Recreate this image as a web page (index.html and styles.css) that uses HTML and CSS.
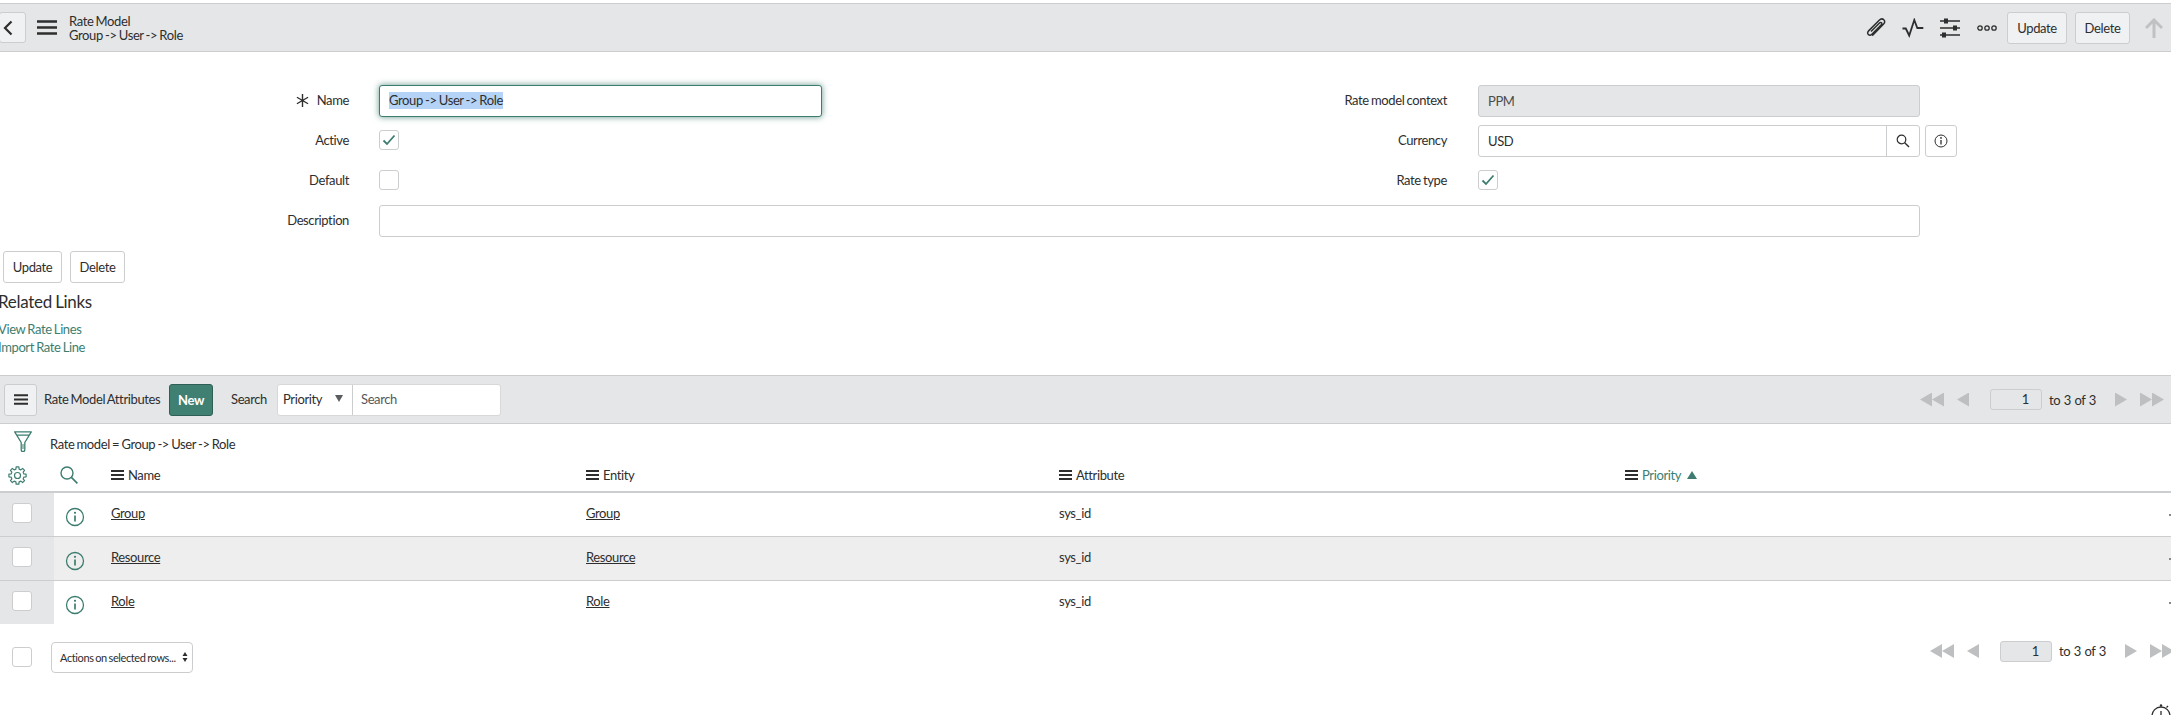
FILE: index.html
```html
<!DOCTYPE html>
<html lang="en">
<head>
<meta charset="utf-8">
<title>Rate Model</title>
<link rel="stylesheet" href="styles.css">
</head>
<body>
<header class="topbar">
  <button class="back" type="button" aria-label="Back"><svg width="10" height="16" viewBox="0 0 10 16"><path d="M8.500 1.500 2 8l6.500 6.500" fill="none" stroke="#2e2e2e" stroke-width="2.200"/></svg></button>
  <svg class="menu" width="20" height="15" viewBox="0 0 20 15"><path d="M0 1.500h20M0 7.500h20M0 13.500h20" stroke="#2e2e2e" stroke-width="2.600"/></svg>
  <div class="title"><div>Rate Model</div><div>Group -&gt; User -&gt; Role</div></div>
  <div class="top-actions">
    <svg class="ic-clip" width="22" height="22" viewBox="0 0 22 22"><path d="M7.200 18.600 18.400 7.300c1.600-1.700 1.500-3.400.4-4.500s-3-1.200-4.600.4L3.600 13.900c-1.200 1.200-1.200 2.700-.3 3.600s2.400.9 3.600-.3L16.300 7.800c.7-.7.700-1.500.2-2s-1.300-.5-2 .2L6 14.500" fill="none" stroke="#2e2e2e" stroke-width="1.500"/></svg>
    <svg class="ic-pulse" width="22" height="20" viewBox="0 0 22 20"><path d="M.5 10.500h3.300l3.400 7L12.300 2l3 8h6" fill="none" stroke="#2e2e2e" stroke-width="1.800"/></svg>
    <svg class="ic-sliders" width="20" height="20" viewBox="0 0 20 20"><path d="M0 3h20M0 10h20M0 17h20" stroke="#2e2e2e" stroke-width="1.500"/><rect x="4" y="0.500" width="4" height="5" fill="#2e2e2e"/><rect x="13" y="7.500" width="4" height="5" fill="#2e2e2e"/><rect x="2" y="14.500" width="4" height="5" fill="#2e2e2e"/></svg>
    <svg class="ic-dots" width="20" height="6" viewBox="0 0 20 6"><circle cx="3" cy="3" r="2.200" fill="none" stroke="#2e2e2e" stroke-width="1.300"/><circle cx="10" cy="3" r="2.200" fill="none" stroke="#2e2e2e" stroke-width="1.300"/><circle cx="17" cy="3" r="2.200" fill="none" stroke="#2e2e2e" stroke-width="1.300"/></svg>
    <button class="btn btn-head btn-update" type="button">Update</button>
    <button class="btn btn-head btn-delete" type="button">Delete</button>
    <svg class="ic-up" width="18" height="20" viewBox="0 0 18 20"><path d="M9 20V3M1 10l8-8 8 8" fill="none" stroke="#bfc1c3" stroke-width="3"/></svg>
  </div>
</header>

<main class="form">
  <label class="lbl lbl-req"><svg width="13" height="13" viewBox="0 0 14 14"><path d="M7 0v14M1 3.500l12 7M13 3.500l-12 7" stroke="#2e2e2e" stroke-width="1.500"/></svg><span>Name</span></label>
  <div class="f-input name-field"><span class="sel">Group -&gt; User -&gt; Role</span></div>
  <div class="lbl col-r">Rate model context</div>
  <div class="f-input readonly wide">PPM</div>

  <div class="lbl">Active</div>
  <div class="chk-cell"><span class="chk"><svg width="14" height="12" viewBox="0 0 14 12"><path d="M1.500 6.500 5 10l7.500-8.500" fill="none" stroke="#3d7d6f" stroke-width="1.800"/></svg></span></div>
  <div class="lbl col-r">Currency</div>
  <div class="lookup"><div class="lookup-text">USD</div><div class="lookup-btn"><svg width="14" height="14" viewBox="0 0 14 14"><circle cx="5.500" cy="5.500" r="4.300" fill="none" stroke="#2e2e2e" stroke-width="1.200"/><path d="m8.700 8.700 4.300 4.300" stroke="#2e2e2e" stroke-width="1.400"/></svg></div></div>
  <div class="info-btn"><svg width="14" height="14" viewBox="0 0 14 14"><circle cx="7" cy="7" r="6" fill="none" stroke="#2e2e2e" stroke-width="1"/><path d="M7 6v4.500" stroke="#2e2e2e" stroke-width="1.300"/><circle cx="7" cy="3.900" r=".9" fill="#2e2e2e"/></svg></div>

  <div class="lbl">Default</div>
  <div class="chk-cell"><span class="chk"></span></div>
  <div class="lbl col-r">Rate type</div>
  <div class="chk-cell col-f"><span class="chk"><svg width="14" height="12" viewBox="0 0 14 12"><path d="M1.500 6.500 5 10l7.500-8.500" fill="none" stroke="#3d7d6f" stroke-width="1.800"/></svg></span></div>

  <div class="lbl">Description</div>
  <div class="f-input desc"></div>
</main>

<div class="form-btns">
  <button class="btn btn-form btn-update2" type="button">Update</button>
  <button class="btn btn-form btn-delete2" type="button">Delete</button>
</div>

<section class="links">
  <h2>Related Links</h2>
  <a href="#">View Rate Lines</a>
  <a href="#">Import Rate Line</a>
</section>

<section class="list-bar">
  <button class="list-menu" type="button" aria-label="Menu"><svg width="14" height="11" viewBox="0 0 14 11"><path d="M0 1.200h14M0 5.500h14M0 9.800h14" stroke="#2e2e2e" stroke-width="2"/></svg></button>
  <span class="list-title">Rate Model Attributes</span>
  <button class="btn-new" type="button">New</button>
  <span class="search-lbl">Search</span>
  <div class="search-box">
    <div class="search-sel"><span>Priority</span><i class="tri-down"></i></div>
    <div class="search-ph">Search</div>
  </div>
  <nav class="pager pager-top">
    <i class="pg l"></i><i class="pg l g1"></i><i class="pg l g2"></i>
    <span class="pg-num">1</span><span class="pg-txt">to 3 of 3</span>
    <i class="pg r g3"></i><i class="pg r g4"></i><i class="pg r"></i>
  </nav>
</section>

<div class="crumb">
  <svg width="18" height="21" viewBox="0 0 18 21"><path d="M.7.900h16.600L10.800 11.500v7.300a1.800 1.800 0 0 1-3.600 0v-7.300zM2.700 4.200h12.600" fill="none" stroke="#3d7d6f" stroke-width="1.300" stroke-linejoin="round"/><path d="M9 13v5" stroke="#3d7d6f" stroke-width="1"/></svg>
  <span>Rate model = Group -&gt; User -&gt; Role</span>
</div>

<table class="grid">
  <colgroup><col class="c-chk"><col class="c-info"><col class="c-name"><col class="c-entity"><col class="c-attr"><col class="c-pri"></colgroup>
  <thead>
    <tr>
      <th><svg class="gear" width="19" height="19" viewBox="0 0 24 24"><path d="M9.990 3.950 10.280 1.140H13.720L14.010 3.950 16.270 4.890 18.470 3.100 20.900 5.530 19.110 7.730 20.050 9.990 22.860 10.280V13.720L20.050 14.010 19.110 16.270 20.900 18.470 18.470 20.900 16.270 19.110 14.010 20.050 13.720 22.860H10.280L9.990 20.050 7.730 19.110 5.530 20.900 3.100 18.470 4.890 16.270 3.950 14.010 1.140 13.720V10.280L3.950 9.990 4.890 7.730 3.100 5.530 5.530 3.100 7.730 4.890Z" fill="none" stroke="#3d7d6f" stroke-width="1.500" stroke-linejoin="round"/><circle cx="12" cy="12" r="3.800" fill="none" stroke="#3d7d6f" stroke-width="1.500"/></svg></th>
      <th><svg class="hsearch" width="18" height="18" viewBox="0 0 18 18"><circle cx="7" cy="7" r="6" fill="none" stroke="#3d7d6f" stroke-width="1.400"/><path d="m11.400 11.400 6 6" stroke="#3d7d6f" stroke-width="1.600"/></svg></th>
      <th><span class="hd"><svg width="13" height="10" viewBox="0 0 13 10"><path d="M0 1h13M0 5h13M0 9h13" stroke="#2e2e2e" stroke-width="1.800"/></svg>Name</span></th>
      <th><span class="hd"><svg width="13" height="10" viewBox="0 0 13 10"><path d="M0 1h13M0 5h13M0 9h13" stroke="#2e2e2e" stroke-width="1.800"/></svg>Entity</span></th>
      <th><span class="hd"><svg width="13" height="10" viewBox="0 0 13 10"><path d="M0 1h13M0 5h13M0 9h13" stroke="#2e2e2e" stroke-width="1.800"/></svg>Attribute</span></th>
      <th><span class="hd sorted"><svg width="13" height="10" viewBox="0 0 13 10"><path d="M0 1h13M0 5h13M0 9h13" stroke="#2e2e2e" stroke-width="1.800"/></svg>Priority<i class="tri-up"></i></span></th>
    </tr>
  </thead>
  <tbody>
    <tr>
      <td class="td-chk"><span class="chk"></span></td>
      <td class="td-info"><svg width="20" height="20" viewBox="0 0 20 20"><circle cx="10" cy="10" r="8.500" fill="none" stroke="#3d7d6f" stroke-width="1.300"/><path d="M10 8.500v6" stroke="#3d7d6f" stroke-width="1.700"/><circle cx="10" cy="5.800" r="1.100" fill="#3d7d6f"/></svg></td>
      <td><a href="#">Group</a></td><td><a href="#">Group</a></td><td>sys_id</td><td class="num"><i class="mark"></i></td>
    </tr>
    <tr class="alt">
      <td class="td-chk"><span class="chk"></span></td>
      <td class="td-info"><svg width="20" height="20" viewBox="0 0 20 20"><circle cx="10" cy="10" r="8.500" fill="none" stroke="#3d7d6f" stroke-width="1.300"/><path d="M10 8.500v6" stroke="#3d7d6f" stroke-width="1.700"/><circle cx="10" cy="5.800" r="1.100" fill="#3d7d6f"/></svg></td>
      <td><a href="#">Resource</a></td><td><a href="#">Resource</a></td><td>sys_id</td><td class="num"><i class="mark"></i></td>
    </tr>
    <tr>
      <td class="td-chk"><span class="chk"></span></td>
      <td class="td-info"><svg width="20" height="20" viewBox="0 0 20 20"><circle cx="10" cy="10" r="8.500" fill="none" stroke="#3d7d6f" stroke-width="1.300"/><path d="M10 8.500v6" stroke="#3d7d6f" stroke-width="1.700"/><circle cx="10" cy="5.800" r="1.100" fill="#3d7d6f"/></svg></td>
      <td><a href="#">Role</a></td><td><a href="#">Role</a></td><td>sys_id</td><td class="num"><i class="mark"></i></td>
    </tr>
  </tbody>
</table>

<footer class="list-foot">
  <span class="chk"></span>
  <div class="actions"><span>Actions on selected rows...</span><svg width="6" height="12" viewBox="0 0 6 12"><path d="M3 1 .5 5h5zM3 11 .5 7h5z" fill="#2e2e2e"/></svg></div>
  <nav class="pager pager-bot">
    <i class="pg l"></i><i class="pg l g1"></i><i class="pg l g2"></i>
    <span class="pg-num">1</span><span class="pg-txt">to 3 of 3</span>
    <i class="pg r g3"></i><i class="pg r g4"></i><i class="pg r"></i>
  </nav>
</footer>
<svg class="corner" width="20" height="20" viewBox="0 0 20 20"><circle cx="10" cy="12" r="9" fill="none" stroke="#2e2e2e" stroke-width="1.300"/><path d="M10 7v7M15.500 3.500l1.500-1.500" stroke="#2e2e2e" stroke-width="1.300"/><circle cx="10" cy="1.500" r="1.200" fill="#2e2e2e"/></svg>
</body>
</html>
```
FILE: styles.css
```css
* { box-sizing: border-box; }
html, body { margin: 0; padding: 0; }
body {
  width: 2171px; height: 715px; overflow: hidden; position: relative; background: #fff;
  font-family: "Lato", "Noto Sans", sans-serif; font-size: 13px; color: #2e2e2e;
  letter-spacing: -0.38px; word-spacing: -0.8px;
}
button { font: inherit; color: inherit; cursor: pointer; letter-spacing: inherit; }
a { color: inherit; }

.topbar {
  margin-top: 3px; height: 49px; display: flex; align-items: center;
  background: #e4e6e7; border-top: 1px solid #cbcdcf; border-bottom: 1px solid #cbcdcf;
}
.back {
  width: 27px; height: 31px; margin-left: -1px; padding: 0 0 0 3px; text-align: left; display: flex; align-items: center;
  background: #f0f1f2; border: 1px solid #cbcdcf; border-radius: 3px;
}
.menu { margin-left: 11px; }
.title { margin-left: 12px; line-height: 14px; font-size: 13px; }
.top-actions { margin-left: auto; display: flex; align-items: center; padding-right: 8px; }
.ic-clip { margin-right: 15px; }
.ic-pulse { margin-right: 16px; }
.ic-sliders { margin-right: 17px; }
.ic-dots { margin-right: 10px; }
.btn { background: #f0f1f2; border: 1px solid #cbcdcf; border-radius: 3px; padding: 0; height: 32px; }
.btn-update { width: 60px; margin-right: 8px; }
.btn-delete { width: 55px; margin-right: 15px; }

.form {
  display: grid; margin-top: 33px;
  grid-template-columns: 349px 473px 625px 473px 37px;
  grid-auto-rows: 32px; row-gap: 8px;
}
.lbl { display: flex; align-items: center; justify-content: flex-end; grid-column: 1; padding-bottom: 2px; }
.lbl-req { gap: 8px; }
.lbl-req svg { margin-top: 1px; }
.lbl.col-r { grid-column: 3; }
.f-input {
  grid-column: 2; margin-left: 30px; width: 443px; height: 32px; border: 1px solid #cbcdcf; border-radius: 3px;
  background: #fff; padding: 0 9px; line-height: 30px;
}
.f-input.name-field {
  border: 1.500px solid #3d7d6f; box-shadow: 0 0 6px rgba(61,125,111,.8); line-height: 29px;
}
.sel { background: #b4d3f6; display: inline-block; line-height: 17px; }
.f-input.wide { grid-column: 4; width: 442px; margin-left: 31px; }
.readonly { background: #e4e6e7; color: #4a4c4e; }
.desc { grid-column: 2 / 5; width: 1541px; }
.chk-cell { grid-column: 2; margin-left: 30px; display: flex; align-items: center; height: 30px; }
.chk-cell.col-f { grid-column: 4; margin-left: 31px; }
.chk {
  width: 20px; height: 20px; display: inline-flex; align-items: center; justify-content: center;
  border: 1px solid #cbcdcf; border-radius: 3px; background: #fff;
}
.lookup {
  grid-column: 4; margin-left: 31px; width: 442px; height: 32px; display: flex;
  border: 1px solid #cbcdcf; border-radius: 3px; background: #fff;
}
.lookup-text { flex: 1; padding-left: 9px; line-height: 30px; }
.lookup-btn { width: 33px; border-left: 1px solid #cbcdcf; display: flex; align-items: center; justify-content: center; }
.info-btn {
  grid-column: 5; margin-left: 5px; width: 32px; height: 32px; border: 1px solid #cbcdcf; border-radius: 3px;
  display: flex; align-items: center; justify-content: center;
}

.form-btns { display: flex; gap: 8px; margin-top: 14px; padding-left: 3px; }
.btn-form { background: #fff; }
.btn-update2 { width: 59px; }
.btn-delete2 { width: 55px; }

.links { margin-top: 8px; margin-left: -2px; height: 84px; }
.links h2 { margin: 0 0 7px; font-size: 17px; font-weight: 400; line-height: 22px; letter-spacing: -0.3px; }
.links a { display: block; line-height: 18px; color: #3d7d6f; text-decoration: none; }

.list-bar {
  height: 49px; display: flex; align-items: center; background: #e4e6e7;
  border-top: 1px solid #cbcdcf; border-bottom: 1px solid #cbcdcf; padding-left: 4px;
}
.list-menu {
  width: 33px; height: 32px; padding: 0; background: #f0f1f2; border: 1px solid #cbcdcf; border-radius: 3px;
  display: flex; align-items: center; justify-content: center;
}
.list-title { margin-left: 7px; width: 125px; white-space: nowrap; padding-bottom: 1px; }
.btn-new {
  width: 44px; height: 32px; padding: 0; background: #3f8072; color: #fff; font-weight: 700;
  border: 1px solid #2f5f55; border-radius: 3px;
}
.search-lbl { margin-left: 18px; width: 46px; padding-bottom: 1px; }
.search-box { display: flex; height: 32px; width: 224px; background: #fff; border: 1px solid #d6d8da; border-radius: 3px; }
.search-sel { width: 75px; display: flex; align-items: center; padding-left: 5px; padding-bottom: 2px; border-right: 1px solid #cbcdcf; }
.tri-down { margin-left: auto; margin-right: 9px; border: 4px solid transparent; border-top: 7px solid #5a5c5e; border-bottom: 0; }
.search-ph { padding-left: 8px; line-height: 28px; color: #55585a; }

.pager { display: flex; align-items: center; margin-left: auto; }
.pager-top { padding-right: 7px; }
.pager-bot { margin-right: -3px; margin-bottom: 12px; }
.pg { width: 12px; height: 14px; background: #bdbfc1; display: block; }
.pg.l { clip-path: polygon(100% 0, 100% 100%, 0 50%); }
.pg.r { clip-path: polygon(0 0, 100% 50%, 0 100%); }
.pg.g1 { margin-right: 13px; }
.pg.g2 { margin-right: 21px; }
.pg.g3 { margin-right: 13px; }
.pg-num {
  width: 52px; height: 21px; line-height: 19px; text-align: right; padding-right: 12px; background: #e4e6e7;
  border: 1px solid #cbcdcf; border-radius: 3px;
}
.pg-txt { margin-left: 7px; width: 66px; white-space: nowrap; word-spacing: 0.6px; }

.crumb { display: flex; align-items: center; height: 38px; padding-left: 14px; gap: 18px; }
.crumb svg { margin-top: -4px; }
.crumb span { margin-top: 2px; }

.grid { width: 2171px; border-collapse: collapse; table-layout: fixed; }
.c-chk { width: 54px; } .c-info { width: 57px; } .c-name { width: 475px; } .c-entity { width: 473px; } .c-attr { width: 566px; } .c-pri { width: 546px; }
.grid th { height: 30px; padding: 4px 0 6px; font-weight: 400; text-align: left; border-bottom: 2px solid #cbcdcf; vertical-align: top; }
.grid th svg.gear { margin-left: 8px; display: block; }
.grid th svg.hsearch { margin-left: 6px; display: block; }
.hd { display: inline-flex; align-items: center; gap: 4px; height: 18px; }
.sorted { color: #3d7d6f; }
.tri-up { margin-left: 2px; border: 5px solid transparent; border-bottom: 8px solid #3d7d6f; border-top: 0; }
.grid td { height: 44px; padding: 0 0 2px; border-bottom: 1px solid #cbcdcf; vertical-align: middle; }
.grid tbody tr:last-child td { border-bottom: 0; }
.grid tr.alt td { background: #eee; }
.grid td.td-chk, .grid tr.alt td.td-chk { background: #e4e6e7; padding: 0 0 0 12px; }
.grid td.td-info { padding: 6px 0 0 11px; }
.grid td.td-info svg { display: block; }
.mark { display: block; width: 2px; height: 2px; margin: 4px 0 0 auto; background: #888; }

.list-foot { display: flex; align-items: center; padding-left: 12px; height: 66px; }
.actions {
  margin-left: 19px; width: 142px; height: 31px; display: flex; align-items: center; justify-content: space-between;
  border: 1px solid #cbcdcf; border-radius: 4px; padding: 0 4px 0 8px; font-size: 11px; white-space: nowrap;
}
.corner { position: absolute; left: 2151px; top: 704px; }
```
